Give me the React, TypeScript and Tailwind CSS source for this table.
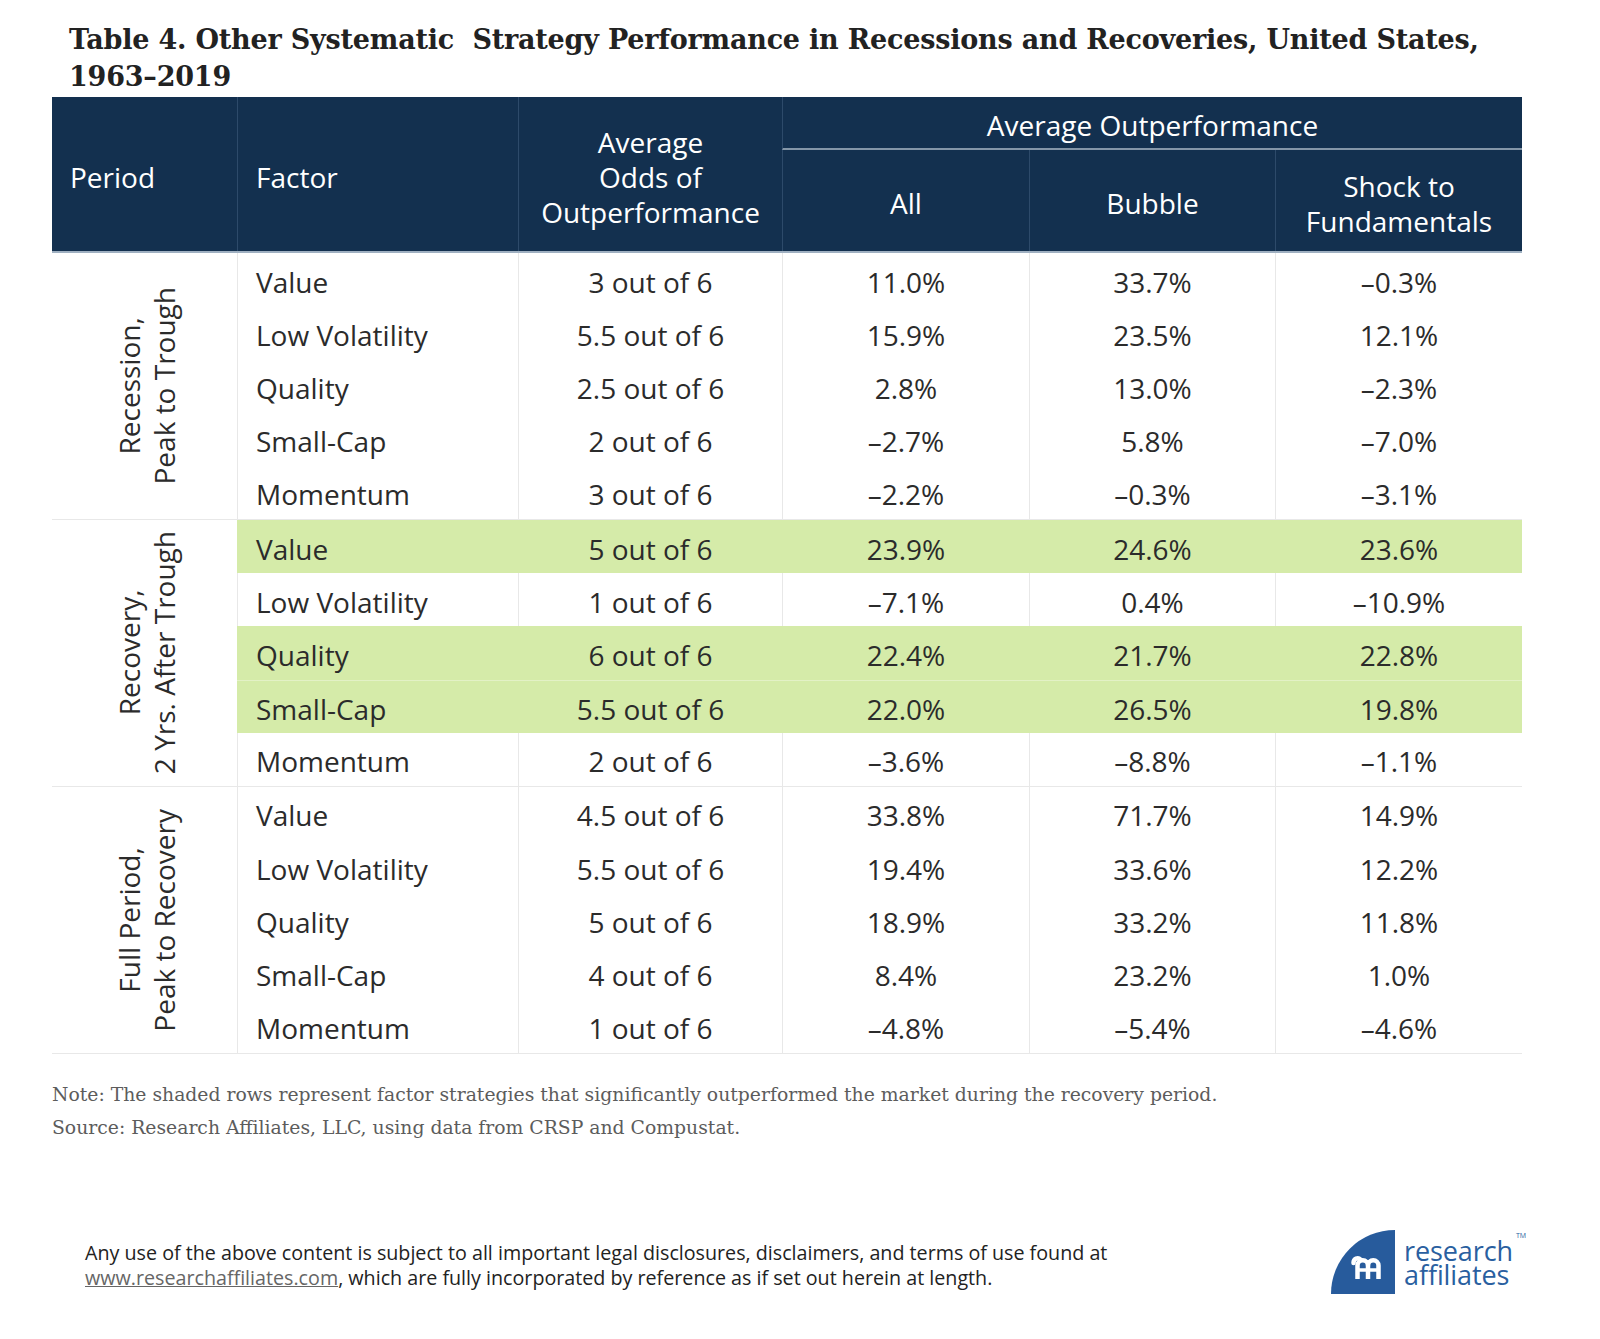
import React from "react";

type Row = {
  factor: string;
  odds: string;
  all: string;
  bubble: string;
  shock: string;
  shaded?: boolean;
};

type Group = {
  label: [string, string];
  rows: Row[];
};

const groups: Group[] = [
  {
    label: ["Recession,", "Peak to Trough"],
    rows: [
      { factor: "Value", odds: "3 out of 6", all: "11.0%", bubble: "33.7%", shock: "–0.3%" },
      { factor: "Low Volatility", odds: "5.5 out of 6", all: "15.9%", bubble: "23.5%", shock: "12.1%" },
      { factor: "Quality", odds: "2.5 out of 6", all: "2.8%", bubble: "13.0%", shock: "–2.3%" },
      { factor: "Small-Cap", odds: "2 out of 6", all: "–2.7%", bubble: "5.8%", shock: "–7.0%" },
      { factor: "Momentum", odds: "3 out of 6", all: "–2.2%", bubble: "–0.3%", shock: "–3.1%" },
    ],
  },
  {
    label: ["Recovery,", "2 Yrs. After Trough"],
    rows: [
      { factor: "Value", odds: "5 out of 6", all: "23.9%", bubble: "24.6%", shock: "23.6%", shaded: true },
      { factor: "Low Volatility", odds: "1 out of 6", all: "–7.1%", bubble: "0.4%", shock: "–10.9%" },
      { factor: "Quality", odds: "6 out of 6", all: "22.4%", bubble: "21.7%", shock: "22.8%", shaded: true },
      { factor: "Small-Cap", odds: "5.5 out of 6", all: "22.0%", bubble: "26.5%", shock: "19.8%", shaded: true },
      { factor: "Momentum", odds: "2 out of 6", all: "–3.6%", bubble: "–8.8%", shock: "–1.1%" },
    ],
  },
  {
    label: ["Full Period,", "Peak to Recovery"],
    rows: [
      { factor: "Value", odds: "4.5 out of 6", all: "33.8%", bubble: "71.7%", shock: "14.9%" },
      { factor: "Low Volatility", odds: "5.5 out of 6", all: "19.4%", bubble: "33.6%", shock: "12.2%" },
      { factor: "Quality", odds: "5 out of 6", all: "18.9%", bubble: "33.2%", shock: "11.8%" },
      { factor: "Small-Cap", odds: "4 out of 6", all: "8.4%", bubble: "23.2%", shock: "1.0%" },
      { factor: "Momentum", odds: "1 out of 6", all: "–4.8%", bubble: "–5.4%", shock: "–4.6%" },
    ],
  },
];

function TableHeader() {
  return (
    <div className="grid grid-cols-[185px_281px_264px_247px_246px_247px] grid-rows-[53px_101px] border-b-2 border-[#9fb0c1] bg-[#13304f] text-white">
      <div className="row-span-2 flex items-center pl-[18px] pt-[6px]">Period</div>
      <div className="row-span-2 flex items-center border-l border-[#2d4a6a] pl-[18px] pt-[6px]">Factor</div>
      <div className="row-span-2 flex items-center justify-center border-l border-[#2d4a6a] pt-[6px] text-center">
        <span>
          Average
          <br />
          Odds of
          <br />
          Outperformance
        </span>
      </div>
      <div className="col-span-3 flex items-center justify-center border-b-2 border-l border-b-[#8496a8] border-l-[#2d4a6a] pt-[6px]">
        Average Outperformance
      </div>
      <div className="flex items-center justify-center border-l border-[#2d4a6a] pt-[6px]">All</div>
      <div className="flex items-center justify-center border-l border-[#2d4a6a] pt-[6px]">Bubble</div>
      <div className="flex items-center justify-center border-l border-[#2d4a6a] pt-[6px] text-center">
        <span>
          Shock to
          <br />
          Fundamentals
        </span>
      </div>
    </div>
  );
}

function DataRow({ row, prevShaded }: { row: Row; prevShaded: boolean }) {
  const line = row.shaded ? "border-transparent" : "border-[#e8e8e8]";
  return (
    <div
      className={`flex h-[53.2px] ${row.shaded ? "bg-[#d5eba9]" : ""} ${
        row.shaded && prevShaded ? "border-t border-[#e3f1c6]" : ""
      }`}
    >
      <div className={`flex w-[281px] items-center border-l pl-[18px] pt-[5px] ${line}`}>{row.factor}</div>
      <div className={`flex w-[264px] items-center justify-center border-l pt-[5px] ${line}`}>{row.odds}</div>
      <div className={`flex w-[247px] items-center justify-center border-l pt-[5px] ${line}`}>{row.all}</div>
      <div className={`flex w-[246px] items-center justify-center border-l pt-[5px] ${line}`}>{row.bubble}</div>
      <div className={`flex w-[247px] items-center justify-center border-l pt-[5px] ${line}`}>{row.shock}</div>
    </div>
  );
}

function GroupBlock({ group }: { group: Group }) {
  return (
    <div className="flex border-b border-[#e8e8e8]">
      <div className="flex w-[185px] items-center justify-center pl-[4px]">
        <div className="rotate-180 text-center [writing-mode:vertical-rl]">
          {group.label[0]}
          <br />
          {group.label[1]}
        </div>
      </div>
      <div className="flex flex-col">
        {group.rows.map((row, i) => (
          <DataRow key={row.factor} row={row} prevShaded={i > 0 && !!group.rows[i - 1].shaded} />
        ))}
      </div>
    </div>
  );
}

function Logo() {
  return (
    <div className="-mt-[6px] flex items-center gap-[9px]">
      <div className="relative h-[64px] w-[64px] rounded-tl-[64px] bg-[#275b9c]">
        <svg
          viewBox="0 0 34 24"
          className="absolute left-[20px] top-[25px] h-[24px] w-[34px]"
          fill="none"
          stroke="white"
          strokeWidth="4.5"
        >
          <path d="M2.5 8 C2.5 3.5 7 2 9.5 4.5" strokeLinecap="round" />
          <path d="M6.5 24 V10.5 A5.25 5.25 0 0 1 17 10.5 V24" />
          <path d="M17 10.5 A5.25 5.25 0 0 1 27.5 10.5 V24" />
          <path d="M6.5 15 H27.5" strokeWidth="3.5" />
        </svg>
      </div>
      <div className="mt-[2px] font-['Open_Sans',sans-serif] text-[27px] leading-[24px] tracking-[-0.1px] text-[#2a5fa0]">
        <div className="relative">
          research
          <span className="absolute right-[-13px] top-[-7px] text-[7px] leading-none">TM</span>
        </div>
        <div>affiliates</div>
      </div>
    </div>
  );
}

export default function App() {
  return (
    <div className="h-[1339px] w-[1600px] overflow-hidden bg-white">
      <h1 className="pl-[69px] pt-[21px] font-['DejaVu_Serif',serif] text-[27px] font-bold leading-[37px] tracking-[-0.2px] text-[#222]">
        Table 4. Other Systematic&nbsp; Strategy Performance in Recessions and Recoveries, United States,
        <br />
        1963–2019
      </h1>

      <div className="ml-[52px] mt-[2px] w-[1470px] font-['Open_Sans',sans-serif] text-[28px] leading-[35px] text-[#2b2b2b]">
        <TableHeader />
        {groups.map((g) => (
          <GroupBlock key={g.label[0]} group={g} />
        ))}
      </div>

      <div className="ml-[52px] mt-[24px] font-['DejaVu_Serif',serif] text-[18.8px] leading-[33px] text-[#5c5c5c]">
        <p>Note: The shaded rows represent factor strategies that significantly outperformed the market during the recovery period.</p>
        <p>Source: Research Affiliates, LLC, using data from CRSP and Compustat.</p>
      </div>

      <div className="mt-[92px] flex items-center justify-between pl-[85px] pr-[87px]">
        <div className="font-['Open_Sans',sans-serif] text-[19.7px] leading-[25px] text-[#222]">
          <p>Any use of the above content is subject to all important legal disclosures, disclaimers, and terms of use found at</p>
          <p>
            <span className="text-[#666] underline">www.researchaffiliates.com</span>, which are fully incorporated by
            reference as if set out herein at length.
          </p>
        </div>
        <Logo />
      </div>
    </div>
  );
}
